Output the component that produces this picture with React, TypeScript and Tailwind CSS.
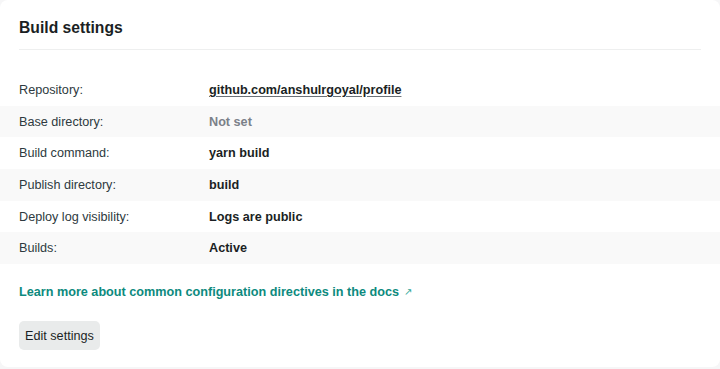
const rows: { label: string; value: string; kind?: "link" | "muted" }[] = [
  { label: "Repository:", value: "github.com/anshulrgoyal/profile", kind: "link" },
  { label: "Base directory:", value: "Not set", kind: "muted" },
  { label: "Build command:", value: "yarn build" },
  { label: "Publish directory:", value: "build" },
  { label: "Deploy log visibility:", value: "Logs are public" },
  { label: "Builds:", value: "Active" },
];

export default function App() {
  return (
    <div className="h-[369px] w-[720px] bg-[#f6f6f7] font-['Liberation_Sans',Arial,sans-serif]">
      <section className="h-[367px] w-full overflow-hidden rounded-lg bg-white">
        <div className="px-[19px]">
          <h2 className="border-b border-[#eeefef] pb-[12px] pt-[18px] text-[15.7px] font-bold leading-[19px] text-[#1b1f24]">
            Build settings
          </h2>
        </div>

        <dl className="mt-[24px]">
          {rows.map((row, i) => (
            <div
              key={row.label}
              className={`flex h-[31.7px] items-center px-[19px] text-[12.65px] leading-[16px] ${
                i % 2 === 1 ? "bg-[#f9f9f9]" : "bg-white"
              }`}
            >
              <dt className="w-[190px] shrink-0 text-[#2e3a40]">{row.label}</dt>
              <dd
                className={
                  row.kind === "link"
                    ? "font-bold text-[#1b1f24] underline decoration-[#6b7178] underline-offset-2"
                    : row.kind === "muted"
                    ? "font-bold text-[#7b8189]"
                    : "font-bold text-[#1b1f24]"
                }
              >
                {row.value}
              </dd>
            </div>
          ))}
        </dl>

        <div className="px-[19px]">
          <a className="mt-[20px] flex items-center gap-[5px] text-[12.65px] font-bold leading-[16px] text-[#0d8a7e]">
            Learn more about common configuration directives in the docs
            <span className="text-[10px] font-normal text-[#2ea596]">↗</span>
          </a>
          <button className="mt-[21px] h-[29px] rounded-[5px] bg-[#e9ebeb] px-[6px] text-[12.65px] leading-[16px] text-[#1b1f24]">
            Edit settings
          </button>
        </div>
      </section>
    </div>
  );
}
